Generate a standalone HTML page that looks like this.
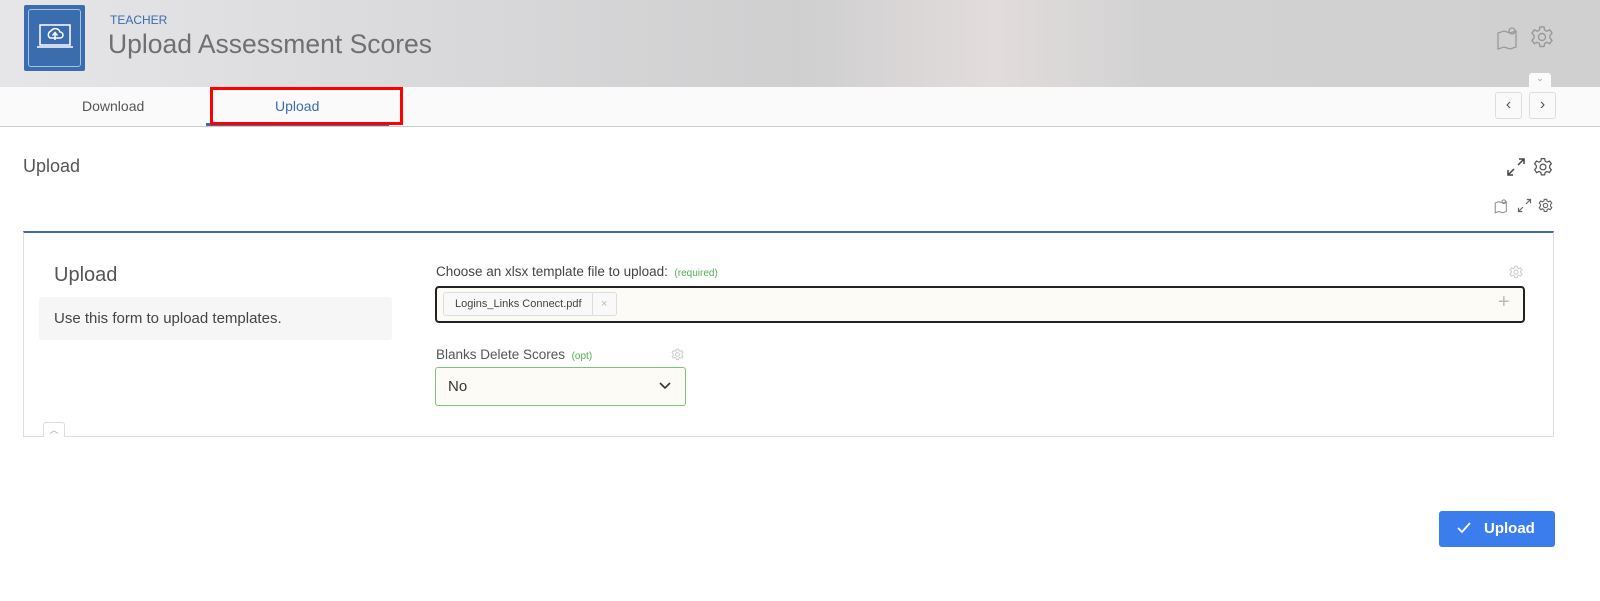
<!DOCTYPE html>
<html><head><meta charset="utf-8"><style>
*{box-sizing:border-box;margin:0;padding:0}
body{width:1600px;height:601px;background:#fff;font-family:"Liberation Sans",sans-serif;position:relative;overflow:hidden;color:#444}
.hdr{position:absolute;left:0;top:0;width:1600px;height:87px;background:linear-gradient(90deg,#e6e6e8 0%,#d8d8da 30%,#cfcfd0 50%,#e2dcdc 62%,#d2d2d2 72%,#d0d0d0 100%)}
.logo{position:absolute;left:24px;top:5px;width:61px;height:66px;background:#3a6cae;border-radius:2px}
.logo .in{position:absolute;left:4px;top:4px;right:4px;bottom:4px;border:1px solid #a9c1e3;border-radius:3px}
.teacher{position:absolute;left:110px;top:13px;font-size:12px;color:#3a6cae}
.title{position:absolute;left:108px;top:29px;font-size:26.5px;color:#707070}
.tabs{position:absolute;left:0;top:87px;width:1600px;height:40px;background:#fafafa;border-bottom:1px solid #ccc}
.tab{position:absolute;top:11px;font-size:14px}
.sq{position:absolute;width:27px;height:27px;border:1px solid #ddd;border-radius:3px;background:#fafafa;top:92px;font-size:16px;color:#555;text-align:center;line-height:24px}
.card{position:absolute;left:23px;top:231px;width:1531px;height:206px;border:1px solid #ddd;border-top:2px solid #3a6cae}
.btn{position:absolute;left:1439px;top:511px;width:116px;height:36px;background:#3b7ded;border-radius:3px;color:#fff;font-weight:bold;font-size:15px;line-height:36px;padding-left:45px}
</style></head><body>
<div class="hdr"></div>
<div class="logo"><div class="in"></div>
<svg style="position:absolute;left:12px;top:18px" width="38" height="28" viewBox="0 0 38 28" fill="none" stroke="#fff" stroke-width="1.5"><rect x="4" y="2" width="30" height="20"/><path d="M1 24h36"/><path d="M14 15a4 4 0 0 1 1-7a5 5 0 0 1 9 1a3 3 0 0 1 0 6z"/><path d="M19 17v-7M16.5 12.5l2.5-3 2.5 3"/></svg></div>
<div class="teacher">TEACHER</div>
<div class="title">Upload Assessment Scores</div>
<svg style="position:absolute;left:1496px;top:26px" width="26" height="24" viewBox="0 0 26 24" fill="none" stroke="#999" stroke-width="1.3"><path d="M2 7l6-2 6 2 6-2v16l-6 2-6-2-6 2z"/><circle cx="16" cy="5" r="3"/></svg>
<svg style="position:absolute;left:1530px;top:25px" width="24" height="24" viewBox="0 0 24 24" fill="none" stroke="#999" stroke-width="1.4"><circle cx="12" cy="12" r="3.5"/><path d="M10 2h4l.6 3 2.3 1.2 2.8-1.4 2.3 3.3-2 2.4v2.5l2 2.4-2.3 3.3-2.8-1.4-2.3 1.2-.6 3h-4l-.6-3-2.3-1.2-2.8 1.4-2.3-3.3 2-2.4v-2.5l-2-2.4 2.3-3.3 2.8 1.4 2.3-1.2z"/></svg>
<div style="position:absolute;left:1529px;top:73px;width:22px;height:14px;background:#fafafa;border-radius:3px 3px 0 0;font-size:9px;color:#999;text-align:center">⌄</div>
<div class="tabs">
<div class="tab" style="left:82px;color:#555">Download</div>
<div class="tab" style="left:275px;color:#3a6cae">Upload</div>
<div style="position:absolute;left:206px;top:36px;width:183px;height:3px;background:#3a6cae"></div>
<div style="position:absolute;left:210px;top:0;width:193px;height:38px;border:3px solid #f00"></div>
</div>
<div class="sq" style="left:1495px">‹</div><div class="sq" style="left:1529px">›</div>
<div style="position:absolute;left:23px;top:156px;font-size:18px;color:#555">Upload</div>
<svg style="position:absolute;left:1506px;top:157px" width="20" height="20" viewBox="0 0 20 20" fill="none" stroke="#444" stroke-width="1.5"><path d="M2 18l6-6M2 13v5h5M18 2l-6 6M13 2h5v5"/></svg>
<svg style="position:absolute;left:1533px;top:157px" width="20" height="20" viewBox="0 0 24 24" fill="none" stroke="#555" stroke-width="1.5"><circle cx="12" cy="12" r="3.5"/><path d="M10 2h4l.6 3 2.3 1.2 2.8-1.4 2.3 3.3-2 2.4v2.5l2 2.4-2.3 3.3-2.8-1.4-2.3 1.2-.6 3h-4l-.6-3-2.3-1.2-2.8 1.4-2.3-3.3 2-2.4v-2.5l-2-2.4 2.3-3.3 2.8 1.4 2.3-1.2z"/></svg>
<svg style="position:absolute;left:1494px;top:198px" width="16" height="16" viewBox="0 0 26 24" fill="none" stroke="#888" stroke-width="1.6"><path d="M2 7l6-2 6 2 6-2v16l-6 2-6-2-6 2z"/><circle cx="16" cy="5" r="3"/></svg>
<svg style="position:absolute;left:1517px;top:198px" width="15" height="15" viewBox="0 0 20 20" fill="none" stroke="#666" stroke-width="1.6"><path d="M2 18l6-6M2 13v5h5M18 2l-6 6M13 2h5v5"/></svg>
<svg style="position:absolute;left:1538px;top:198px" width="15" height="15" viewBox="0 0 24 24" fill="none" stroke="#666" stroke-width="1.8"><circle cx="12" cy="12" r="3.5"/><path d="M10 2h4l.6 3 2.3 1.2 2.8-1.4 2.3 3.3-2 2.4v2.5l2 2.4-2.3 3.3-2.8-1.4-2.3 1.2-.6 3h-4l-.6-3-2.3-1.2-2.8 1.4-2.3-3.3 2-2.4v-2.5l-2-2.4 2.3-3.3 2.8 1.4 2.3-1.2z"/></svg>
<div class="card"></div>
<div style="position:absolute;left:54px;top:264px;font-size:20px;color:#555">Upload</div>
<div style="position:absolute;left:39px;top:297px;width:353px;height:43px;background:#f6f6f6;border-radius:3px;font-size:15px;color:#444;padding:13px 0 0 15px">Use this form to upload templates.</div>
<div style="position:absolute;left:43px;top:422px;width:22px;height:15px;border:1px solid #ddd;border-bottom:none;border-radius:3px 3px 0 0;background:#fff;font-size:9px;color:#aaa;text-align:center;line-height:14px">︿</div>
<div style="position:absolute;left:436px;top:264px;font-size:13.5px;color:#444">Choose an xlsx template file to upload: <span style="font-size:10px;color:#4caf50">&nbsp;(required)</span></div>
<svg style="position:absolute;left:1509px;top:265px" width="14" height="14" viewBox="0 0 24 24" fill="none" stroke="#ccc" stroke-width="1.8"><circle cx="12" cy="12" r="3.5"/><path d="M10 2h4l.6 3 2.3 1.2 2.8-1.4 2.3 3.3-2 2.4v2.5l2 2.4-2.3 3.3-2.8-1.4-2.3 1.2-.6 3h-4l-.6-3-2.3-1.2-2.8 1.4-2.3-3.3 2-2.4v-2.5l-2-2.4 2.3-3.3 2.8 1.4 2.3-1.2z"/></svg>
<div style="position:absolute;left:435px;top:286px;width:1090px;height:37px;border:2px solid #222;border-radius:4px;background:#fdfbf5"></div>
<div style="position:absolute;left:443px;top:292px;width:174px;height:24px;border:1px solid #ddd;border-radius:3px;background:#f9f9f9;font-size:11px;color:#444;line-height:22px;padding-left:11px">Logins_Links Connect.pdf<span style="position:absolute;left:148px;top:0;height:22px;border-left:1px solid #ddd;padding-left:8px;color:#bbb">×</span></div>
<div style="position:absolute;left:1498px;top:291px;font-size:20px;color:#bbb">+</div>
<div style="position:absolute;left:436px;top:347px;font-size:13.5px;color:#555">Blanks Delete Scores <span style="font-size:10px;color:#4caf50">&nbsp;(opt)</span></div>
<svg style="position:absolute;left:671px;top:348px" width="13" height="13" viewBox="0 0 24 24" fill="none" stroke="#ccc" stroke-width="1.8"><circle cx="12" cy="12" r="3.5"/><path d="M10 2h4l.6 3 2.3 1.2 2.8-1.4 2.3 3.3-2 2.4v2.5l2 2.4-2.3 3.3-2.8-1.4-2.3 1.2-.6 3h-4l-.6-3-2.3-1.2-2.8 1.4-2.3-3.3 2-2.4v-2.5l-2-2.4 2.3-3.3 2.8 1.4 2.3-1.2z"/></svg>
<div style="position:absolute;left:435px;top:367px;width:251px;height:39px;border:1px solid #7cc47c;border-radius:3px;background:#fdfbf5;font-size:15px;color:#333;line-height:37px;padding-left:12px">No</div>
<svg style="position:absolute;left:658px;top:381px" width="14" height="10" viewBox="0 0 14 10" fill="none" stroke="#333" stroke-width="1.6"><path d="M2 2l5 5 5-5"/></svg>
<div class="btn">Upload</div>
<svg style="position:absolute;left:1457px;top:522px" width="14" height="12" viewBox="0 0 14 12" fill="none" stroke="#fff" stroke-width="1.8"><path d="M1 6l4 4 8-9"/></svg>
</body></html>
